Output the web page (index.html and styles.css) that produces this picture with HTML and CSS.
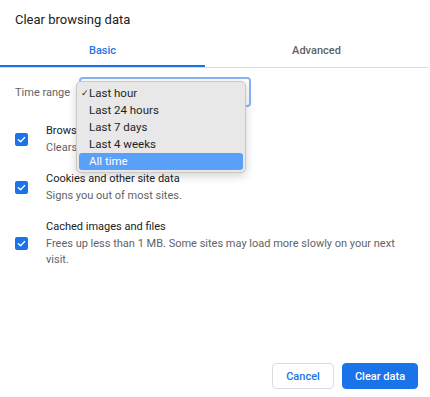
FILE: index.html
```html
<!DOCTYPE html>
<html>
<head>
<meta charset="utf-8">
<link rel="stylesheet" href="styles.css">
</head>
<body>
<div class="dialog">
  <h1 class="title">Clear browsing data</h1>
  <div class="tabs">
    <div class="tab active">Basic</div>
    <div class="tab">Advanced</div>
  </div>
  <div class="content">
    <div class="range-row">
      <span class="range-label">Time range</span>
      <div class="select-wrap">
        <div class="select"></div>
        <div class="menu">
          <div class="menu-item"><span class="tick">✓</span>Last hour</div>
          <div class="menu-item">Last 24 hours</div>
          <div class="menu-item">Last 7 days</div>
          <div class="menu-item">Last 4 weeks</div>
          <div class="menu-item selected">All time</div>
        </div>
      </div>
    </div>
    <div class="items">
      <div class="item">
        <span class="checkbox"><svg viewBox="0 0 14 14" width="14" height="14"><path d="M3.6 7.2 L6 9.4 L10.4 4.8" fill="none" stroke="#fff" stroke-width="1.5" stroke-linecap="round" stroke-linejoin="round"/></svg></span>
        <div class="item-text">
          <div class="item-title">Browsing history</div>
          <div class="item-sub">Clears history from all synced devices.</div>
        </div>
      </div>
      <div class="item">
        <span class="checkbox"><svg viewBox="0 0 14 14" width="14" height="14"><path d="M3.6 7.2 L6 9.4 L10.4 4.8" fill="none" stroke="#fff" stroke-width="1.5" stroke-linecap="round" stroke-linejoin="round"/></svg></span>
        <div class="item-text">
          <div class="item-title">Cookies and other site data</div>
          <div class="item-sub">Signs you out of most sites.</div>
        </div>
      </div>
      <div class="item">
        <span class="checkbox"><svg viewBox="0 0 14 14" width="14" height="14"><path d="M3.6 7.2 L6 9.4 L10.4 4.8" fill="none" stroke="#fff" stroke-width="1.5" stroke-linecap="round" stroke-linejoin="round"/></svg></span>
        <div class="item-text">
          <div class="item-title">Cached images and files</div>
          <div class="item-sub">Frees up less than 1 MB. Some sites may load more slowly on your next visit.</div>
        </div>
      </div>
    </div>
  </div>
  <div class="footer">
    <button class="btn btn-cancel">Cancel</button>
    <button class="btn btn-primary">Clear data</button>
  </div>
</div>
</body>
</html>
```

FILE: styles.css
```css
* { box-sizing: border-box; }
html, body { margin: 0; padding: 0; background: #fff; }
body {
  font-family: Roboto, "Noto Sans", Arial, sans-serif;
  color: #202124;
  width: 430px;
  height: 397px;
  overflow: hidden;
}
.dialog {
  height: 397px;
  display: flex;
  flex-direction: column;
}
.title {
  margin: 0;
  padding: 11px 15px 0;
  font-size: 13px;
  font-weight: 400;
  line-height: 18px;
  color: #202124;
}
.tabs {
  margin-top: 4px;
  display: grid;
  grid-template-columns: 205px 1fr;
  border-bottom: 1px solid #dadce0;
  margin-right: 2px;
}
.tab {
  height: 34px;
  display: flex;
  align-items: center;
  justify-content: center;
  font-size: 11px;
  font-weight: 500;
  color: #5f6368;
  border-bottom: 2px solid transparent;
  padding-top: 2px;
}
.tab.active {
  color: #1a73e8;
  border-bottom-color: #1a73e8;
}
.content {
  padding: 9px 0 0 15px;
}
.range-row {
  display: flex;
  align-items: center;
  height: 30px;
}
.range-label {
  font-size: 11px;
  color: #5f6368;
  width: 64px;
  white-space: nowrap;
}
.select-wrap {
  position: relative;
  width: 172px;
  height: 30px;
}
.select {
  width: 172px;
  height: 30px;
  border: 2px solid #8ab4f8;
  border-radius: 4px;
  background: #fff;
}
.menu {
  position: absolute;
  left: -3px;
  top: 4px;
  width: 170px;
  padding: 3px 2px 2px;
  background: #e8e8e8;
  border: 1px solid #c9c9c9;
  border-radius: 5px;
  box-shadow: 0 3px 10px rgba(0,0,0,0.18);
  z-index: 2;
}
.menu-item {
  position: relative;
  height: 17px;
  line-height: 17px;
  padding-left: 10px;
  font-size: 11.5px;
  color: #1f1f1f;
  border-radius: 3px;
}
.menu-item .tick {
  position: absolute;
  left: 2px;
  top: 0;
  font-size: 9px;
}
.menu-item.selected {
  background: #5aa0f8;
  color: #fff;
}
.items {
  display: flex;
  flex-direction: column;
  gap: 15px;
  margin-top: 16px;
}
.item {
  display: flex;
  align-items: center;
}
.checkbox {
  width: 13px;
  height: 13px;
  border-radius: 2px;
  background: #1a73e8;
  display: flex;
  align-items: center;
  justify-content: center;
  flex: none;
  margin-right: 18px;
}
.checkbox svg { width: 13px; height: 13px; }
.item-text {
  font-size: 11px;
  line-height: 16.5px;
  padding-right: 28px;
}
.item-title { color: #202124; }
.item-sub { color: #5f6368; }
.footer {
  margin-top: auto;
  display: flex;
  justify-content: flex-end;
  gap: 8px;
  padding: 0 12px 8px 0;
}
.btn {
  height: 26px;
  border-radius: 4px;
  font-family: inherit;
  font-size: 11px;
  font-weight: 500;
  padding: 0;
  cursor: pointer;
}
.btn-cancel {
  width: 62px;
  background: #fff;
  border: 1px solid #dadce0;
  color: #1a73e8;
}
.btn-primary {
  width: 76px;
  background: #1a73e8;
  border: 1px solid #1a73e8;
  color: #fff;
}
```
